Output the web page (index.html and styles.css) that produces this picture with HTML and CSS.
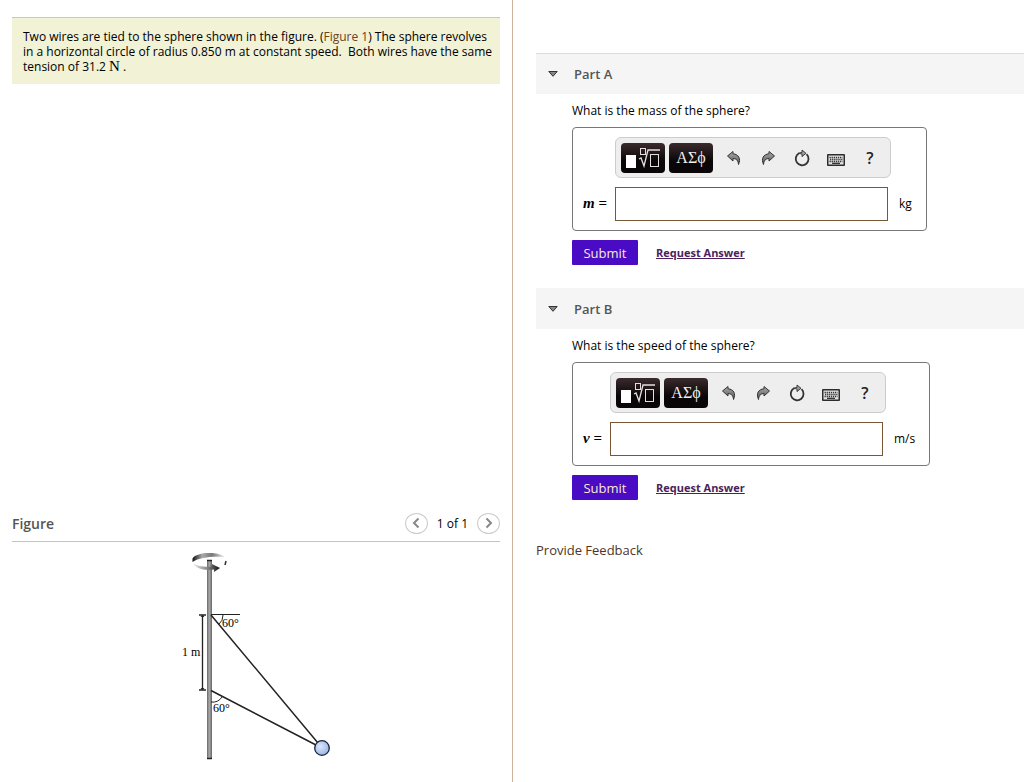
FILE: index.html
```
<!DOCTYPE html>
<html lang="en">
<head>
    <meta charset="UTF-8">
    <meta name="viewport" content="width=device-width, initial-scale=1.0">
    <title>Two wires and a sphere</title>
    <link rel="stylesheet" href="styles.css">
</head>
<body>

<!-- Shared icons -->
<svg class="sprite" aria-hidden="true">
    <defs>
        <linearGradient id="arrowFill" x1="0" y1="0" x2="0" y2="1">
            <stop offset="0" stop-color="#aaa"/>
            <stop offset="1" stop-color="#555"/>
        </linearGradient>
    </defs>
    <symbol id="icon-root" viewBox="0 0 36 22">
        <rect x="1" y="8" width="10" height="13" fill="#fff"/>
        <g fill="none" stroke="#e4dfdf">
            <rect x="15.500" y="1.500" width="5" height="6"/>
            <path d="M14 12l2-1 3 8 4-16h12" stroke-width="1.3"/>
            <rect x="25.500" y="7.500" width="8" height="12"/>
        </g>
    </symbol>
    <symbol id="icon-undo" viewBox="0 0 16 16">
        <path d="M1.500 6L7 1.500V3.800C12.500 4.200 15.200 8.500 12.500 14.500C12.200 10.500 10.500 8.700 7 8.500V11z" fill="url(#arrowFill)" stroke="#333" stroke-linejoin="round"/>
    </symbol>
    <symbol id="icon-reset" viewBox="0 0 16 18">
        <path d="M5 4.300A6.400 6.400 0 1 0 12.500 5.200" fill="none" stroke="#333" stroke-width="1.800"/>
        <path d="M4.500 4.200L8 3.300V1l4 3.300-4 3.300V5z" fill="#999" stroke="#333" stroke-width=".9"/>
    </symbol>
    <symbol id="icon-keyboard" viewBox="0 0 18 12">
        <rect x="0" y="0" width="18" height="12" rx="1" fill="#2c2c2c"/>
        <rect x="1.500" y="1.500" width="15" height="9" fill="#e4e4e4"/>
        <path d="M2.500 3.500h13M3 5.500h13M2.500 7.500h13" stroke="#333" stroke-width="1.300" stroke-dasharray="1.300 .8"/>
        <path d="M5 9.300h8" stroke="#222" stroke-width="1.200"/>
    </symbol>
</svg>

<div class="page">
    <div class="left">
        <div class="intro">
            Two wires are tied to the sphere shown in the figure. (<a href="#figure">Figure 1</a>) The sphere revolves<br>
            in a horizontal circle of radius 0.850 m at constant speed. &nbsp;Both wires have the same<br>
            tension of 31.2 <span class="math-unit">N</span> .
        </div>

        <div class="figure" id="figure">
            <div class="figure-head">
                <h2>Figure</h2>
                <div class="pager">
                    <button type="button" aria-label="Previous figure">
                        <svg width="8" height="12" viewBox="0 0 8 12"><path d="M6.500 1.500L2 6l4.500 4.500"/></svg>
                    </button>
                    <span>1 of 1</span>
                    <button type="button" aria-label="Next figure">
                        <svg width="8" height="12" viewBox="0 0 8 12"><path d="M1.500 1.500L6 6l-4.500 4.500"/></svg>
                    </button>
                </div>
            </div>
            <svg class="diagram" width="148" height="210" viewBox="182 550 148 210" role="img" aria-label="Sphere tied to a rotating rod by two wires">
                <defs>
                    <linearGradient id="rod" x1="0" x2="1">
                        <stop offset="0" stop-color="#666"/>
                        <stop offset=".45" stop-color="#aaa"/>
                        <stop offset="1" stop-color="#666"/>
                    </linearGradient>
                    <linearGradient id="ringBack" x1="0" x2="1">
                        <stop offset="0" stop-color="#111"/>
                        <stop offset=".3" stop-color="#aaa"/>
                        <stop offset=".6" stop-color="#777"/>
                        <stop offset="1" stop-color="#eee"/>
                    </linearGradient>
                    <linearGradient id="ringFront" x1="0" x2="1">
                        <stop offset="0" stop-color="#eee"/>
                        <stop offset=".6" stop-color="#777"/>
                        <stop offset="1" stop-color="#111"/>
                    </linearGradient>
                    <radialGradient id="ball" cx=".4" cy=".4" r=".7">
                        <stop offset="0" stop-color="#dce7fb"/>
                        <stop offset="1" stop-color="#91aee0"/>
                    </radialGradient>
                </defs>
                <!-- rotation ring and rod -->
                <path d="M192.500 562V558.500C196 552 219 551 225 557.500C216 556 200 557 192.500 562z" fill="url(#ringBack)"/>
                <rect x="207" y="560" width="5" height="199" rx="1" fill="url(#rod)"/>
                <path d="M207 560.500h5M207 758.500h5" stroke="#222" stroke-width="1.500"/>
                <path d="M193 563C198 567 207 567 212 566.500V564l8 4-6 4v-2.500C205 571 196 569 193 563z" fill="url(#ringFront)"/>
                <path d="M226 561l-1 4" stroke="#333" stroke-width="1.500"/>
                <!-- wires, angles and the 1 m mark -->
                <g fill="none" stroke="#222">
                    <path d="M211 615L318 743M211 690.500L316 745" stroke-width="1.500"/>
                    <path d="M211 614.500h29M223 615Q223 621 219 624M211 702Q218 703 222 697"/>
                    <path d="M202.500 616V689M199 615h7M199 690h7" stroke-width="1.300"/>
                    <path d="M201 617l1.500-2 1.500 2M201 688l1.500 2 1.500-2"/>
                    <circle cx="322" cy="748" r="7.300" fill="url(#ball)" stroke="#17233d" stroke-width="1.300"/>
                </g>
                <text x="182" y="656">1 m</text>
                <text x="222" y="627">60°</text>
                <text x="213" y="712">60°</text>
            </svg>
        </div>
    </div>

    <div class="right">
        <section class="part">
            <div class="part-head">
                <svg width="10" height="6" viewBox="0 0 10 6"><path d="M.8.500h8.400L5 5.300z" fill="#888" stroke="#333"/></svg>
                <h2>Part A</h2>
            </div>
            <div class="part-body">
                <p>What is the mass of the sphere?</p>
                <div class="answer">
                    <div class="toolbar">
                        <button type="button" class="dark" aria-label="Templates"><svg width="36" height="22"><use href="#icon-root"/></svg></button>
                        <button type="button" class="dark">ΑΣϕ</button>
                        <button type="button" class="tool" aria-label="Undo"><svg width="16" height="16"><use href="#icon-undo"/></svg></button>
                        <button type="button" class="tool" aria-label="Redo"><svg class="flip" width="16" height="16"><use href="#icon-undo"/></svg></button>
                        <button type="button" class="tool" aria-label="Reset"><svg width="16" height="18"><use href="#icon-reset"/></svg></button>
                        <button type="button" class="tool" aria-label="Keyboard"><svg class="keys" width="18" height="12"><use href="#icon-keyboard"/></svg></button>
                        <button type="button" class="tool">?</button>
                    </div>
                    <label for="mass"><i>m</i> =</label>
                    <input type="text" id="mass">
                    <span class="unit">kg</span>
                </div>
                <div class="actions">
                    <button type="submit" class="submit">Submit</button>
                    <a href="#">Request Answer</a>
                </div>
            </div>
        </section>

        <section class="part">
            <div class="part-head">
                <svg width="10" height="6" viewBox="0 0 10 6"><path d="M.8.500h8.400L5 5.300z" fill="#888" stroke="#333"/></svg>
                <h2>Part B</h2>
            </div>
            <div class="part-body">
                <p>What is the speed of the sphere?</p>
                <div class="answer">
                    <div class="toolbar">
                        <button type="button" class="dark" aria-label="Templates"><svg width="36" height="22"><use href="#icon-root"/></svg></button>
                        <button type="button" class="dark">ΑΣϕ</button>
                        <button type="button" class="tool" aria-label="Undo"><svg width="16" height="16"><use href="#icon-undo"/></svg></button>
                        <button type="button" class="tool" aria-label="Redo"><svg class="flip" width="16" height="16"><use href="#icon-undo"/></svg></button>
                        <button type="button" class="tool" aria-label="Reset"><svg width="16" height="18"><use href="#icon-reset"/></svg></button>
                        <button type="button" class="tool" aria-label="Keyboard"><svg class="keys" width="18" height="12"><use href="#icon-keyboard"/></svg></button>
                        <button type="button" class="tool">?</button>
                    </div>
                    <label for="speed"><i>v</i> =</label>
                    <input type="text" id="speed">
                    <span class="unit">m/s</span>
                </div>
                <div class="actions">
                    <button type="submit" class="submit">Submit</button>
                    <a href="#">Request Answer</a>
                </div>
            </div>
        </section>

        <a href="#" class="feedback">Provide Feedback</a>
    </div>
</div>

</body>
</html>
```

FILE: styles.css
```
* {
    box-sizing: border-box;
}
body {
    margin: 0;
    font-family: "Open Sans", "Noto Sans", sans-serif;
    font-size: 12px;
    color: #000;
    background-color: #fff;
}
h2, p {
    margin: 0;
}
button {
    padding: 0;
    border: none;
    font-family: inherit;
    cursor: pointer;
}
.sprite {
    position: absolute;
    width: 0;
    height: 0;
}
.page {
    display: flex;
    min-height: 100vh;
}
.left {
    display: flex;
    flex-direction: column;
    justify-content: space-between;
    width: 50%;
    padding: 17px 12px 22px;
}
.right {
    flex: 1;
    padding: 53px 0 20px 23px;
    border-left: 1px solid #cfb09a;
}

/* Problem text */
.intro {
    padding: 11px 0 10px 11px;
    border-top: 1px solid #c9cbb6;
    background-color: #f1f2d6;
    line-height: 15px;
    white-space: nowrap;
}
.intro a {
    color: #6b4423;
    text-decoration: none;
}
.math-unit {
    font-family: "Liberation Serif", serif;
    font-size: 15px;
    line-height: 14px;
}

/* Figure */
.figure-head {
    display: flex;
    justify-content: space-between;
    align-items: center;
    height: 37px;
    border-bottom: 1px solid #c4c4c4;
}
h2 {
    color: #555;
    font-size: 13px;
    font-weight: 600;
}
.figure-head h2 {
    font-size: 14px;
}
.pager {
    display: flex;
    align-items: center;
    gap: 9px;
}
.pager button {
    display: flex;
    align-items: center;
    justify-content: center;
    width: 23px;
    height: 21px;
    border: 1px solid #ccc;
    border-radius: 50%;
    background-color: #fff;
}
.pager path {
    fill: none;
    stroke: #888;
    stroke-width: 2;
}
.diagram {
    display: block;
    margin: 8px auto 0;
    font-family: "Liberation Serif", serif;
    font-size: 12px;
}

/* Parts */
.part {
    margin-bottom: 23px;
}
.part-head {
    display: flex;
    align-items: center;
    gap: 16px;
    height: 41px;
    padding-left: 12px;
    background-color: #f5f5f5;
}
.part:first-child .part-head {
    border-top: 1px solid #ddd;
}
.part-body {
    padding-left: 36px;
}
.part-body p {
    padding: 8px 0;
    line-height: 17px;
}
.answer {
    display: inline-grid;
    grid-template-columns: auto 276px auto;
    row-gap: 8px;
    column-gap: 8px;
    align-items: center;
    height: 104px;
    padding: 9px 14px 9px 10px;
    border: 1px solid #777;
    border-radius: 4px;
    vertical-align: top;
}
.toolbar {
    grid-column: 2;
    display: flex;
    align-items: center;
    height: 41px;
    padding-left: 5px;
    border: 1px solid #ccc;
    border-radius: 6px;
    background-color: #eee;
}
.dark {
    display: flex;
    align-items: center;
    justify-content: center;
    width: 44px;
    height: 30px;
    margin-right: 4px;
    border-radius: 4px;
    background: linear-gradient(#3b2b2d, #0a0607 60%);
    color: #eee;
    font-family: "Liberation Serif", serif;
    font-size: 16px;
}
.tool {
    display: flex;
    align-items: center;
    justify-content: center;
    width: 34px;
    height: 30px;
    background: none;
    color: #222;
    font-size: 16px;
    font-weight: 600;
}
.flip {
    transform: scaleX(-1);
}
.keys {
    margin-top: 4px;
}
.answer label {
    grid-column: 1;
    font-family: "Liberation Serif", serif;
    font-size: 15px;
    font-weight: bold;
}
.answer input {
    width: 273px;
    height: 34px;
    padding: 0 6px;
    border: 1px solid #7b5635;
    background-color: #fff;
    font-size: 14px;
}
.actions {
    display: flex;
    align-items: center;
    gap: 18px;
    margin-top: 9px;
}
.submit {
    width: 66px;
    height: 25px;
    border-radius: 1px;
    background-color: #490bc4;
    color: #fbe9cf;
    font-size: 13px;
}
.actions a {
    color: #4b1f5c;
    font-size: 11px;
    font-weight: bold;
}
.feedback {
    display: inline-block;
    margin-top: 18px;
    color: #4f3426;
    font-size: 13px;
    text-decoration: none;
}
```
